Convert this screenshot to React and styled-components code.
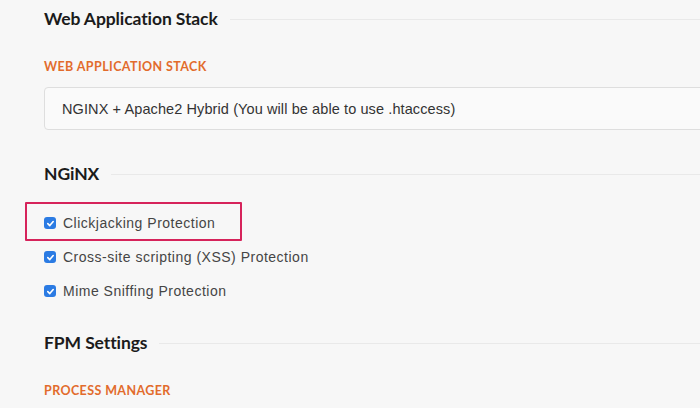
import styled, { createGlobalStyle } from "styled-components";

const GlobalStyle = createGlobalStyle`
  html, body {
    margin: 0;
    padding: 0;
    background: #f7f7f7;
    overflow: hidden;
  }
`;

const Page = styled.div`
  width: 700px;
  height: 408px;
  padding: 6px 0 0 44px;
  box-sizing: border-box;
  font-family: "Liberation Sans", Arial, sans-serif;
`;

const SectionTitle = styled.div`
  display: flex;
  align-items: center;
  height: 24px;
  margin-top: ${(p) => p.$top || 0}px;

  h2 {
    margin: 0;
    font-family: Lato, "Open Sans", sans-serif;
    font-weight: 700;
    font-size: 17.5px;
    color: #1b1b1b;
    letter-spacing: -0.1px;
  }

  &::after {
    content: "";
    flex: 1;
    height: 1px;
    margin: 2px 0 0 12px;
    background: #e9e9e9;
  }
`;

const FieldLabel = styled.div`
  margin-top: ${(p) => p.$top || 0}px;
  height: 14px;
  line-height: 14px;
  font-family: Lato, "Open Sans", sans-serif;
  font-weight: 700;
  font-size: 12.5px;
  letter-spacing: 0.4px;
  text-transform: uppercase;
  color: #e26b2c;
`;

const SelectBox = styled.div`
  margin-top: 13px;
  margin-right: -10px;
  height: 43px;
  box-sizing: border-box;
  display: flex;
  align-items: center;
  padding-left: 17px;
  background: #fafafa;
  border: 1px solid #dedede;
  border-radius: 4px;
  font-size: 14.5px;
  letter-spacing: 0.1px;
  color: #333;
`;

const CheckList = styled.div`
  margin-top: 21px;
  display: flex;
  flex-direction: column;
`;

const CheckRow = styled.label`
  position: relative;
  display: flex;
  align-items: center;
  width: fit-content;
  height: 34px;
  font-size: 14px;
  letter-spacing: 0.5px;
  color: #454545;

  ${(p) =>
    p.$highlight &&
    `
    &::after {
      content: "";
      position: absolute;
      left: -19px;
      right: -27px;
      top: -4px;
      bottom: -1px;
      border: 2.5px solid #d6235b;
      border-radius: 1px;
    }
  `}
`;

const Box = styled.span`
  width: 12px;
  height: 12px;
  border-radius: 3px;
  background: #2b7be3;
  margin-right: 7px;
  display: flex;
  align-items: center;
  justify-content: center;
`;

const Check = () => (
  <Box>
    <svg width="9" height="9" viewBox="0 0 10 10">
      <path d="M2 5.2 L4.2 7.3 L8 2.8" fill="none" stroke="#fff" strokeWidth="1.8" strokeLinecap="round" strokeLinejoin="round" />
    </svg>
  </Box>
);

const options = [
  { label: "Clickjacking Protection", highlight: true },
  { label: "Cross-site scripting (XSS) Protection" },
  { label: "Mime Sniffing Protection" },
];

export default function App() {
  return (
    <>
      <GlobalStyle />
      <Page>
        <SectionTitle>
          <h2>Web Application Stack</h2>
        </SectionTitle>
        <FieldLabel $top={30}>Web Application Stack</FieldLabel>
        <SelectBox>NGINX + Apache2 Hybrid (You will be able to use .htaccess)</SelectBox>

        <SectionTitle $top={31}>
          <h2>NGiNX</h2>
        </SectionTitle>
        <CheckList>
          {options.map((o) => (
            <CheckRow key={o.label} $highlight={o.highlight}>
              <Check />
              {o.label}
            </CheckRow>
          ))}
        </CheckList>

        <SectionTitle $top={22}>
          <h2>FPM Settings</h2>
        </SectionTitle>
        <FieldLabel $top={30}>Process Manager</FieldLabel>
      </Page>
    </>
  );
}
